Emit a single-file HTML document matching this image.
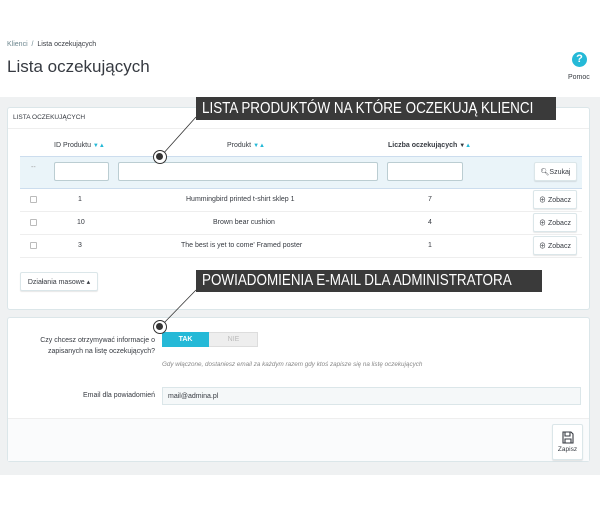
<!DOCTYPE html><html><head><meta charset="utf-8"><style>
*{box-sizing:border-box;margin:0;padding:0}
body{width:600px;height:510px;background:#fff;font-family:"Liberation Sans","Noto Sans CJK JP",sans-serif;color:#363a41;position:relative;overflow:hidden}
.a{position:absolute}
.gray{left:0;top:97px;width:600px;height:378px;background:#eff1f2}
.panel{background:#fff;border:1px solid #dbe6e9;border-radius:3px}
.t{font-size:7px;white-space:nowrap}
.inp{background:#fff;border:1px solid #bbcdd2;border-radius:2px}
.btn{background:#fff;border:1px solid #dbe6e9;border-radius:2px;font-size:7px;display:flex;align-items:center;justify-content:center;box-shadow:0 1px 1px rgba(0,0,0,.1)}
.call{background:#3a3a3a;color:#fff;font-size:16px;padding:0 6px;white-space:nowrap;overflow:hidden;line-height:23px}
.call span{display:inline-block;transform:scaleX(.84);transform-origin:0 50%}
.dot{width:14px;height:14px;border-radius:50%;border:1.5px solid #333;background:#fff}
.dot::after{content:"";position:absolute;left:2px;top:2px;width:7px;height:7px;border-radius:50%;background:#333}
.cb{width:7px;height:7px;border:1px solid #bbb;border-radius:1px}
.tri{color:#25b9d7;font-size:6px}
</style></head><body>
<div class="a t" style="left:7px;top:41px;color:#6c868e">Klienci &nbsp;/&nbsp; <span style="color:#363a41">Lista oczekujących</span></div>
<div class="a" style="left:7px;top:57px;font-size:17px">Lista oczekujących</div>
<div class="a" style="left:572px;top:52px;width:15px;height:15px;border-radius:50%;background:#25b9d7;color:#fff;font-weight:bold;font-size:11px;text-align:center;line-height:15px">?</div>
<div class="a t" style="left:568px;top:74px">Pomoc</div>
<div class="a gray"></div>
<div class="a panel" style="left:7px;top:107px;width:583px;height:203px"></div>
<div class="a t" style="left:13px;top:114px;font-size:6.5px">LISTA OCZEKUJĄCYCH</div>
<div class="a" style="left:8px;top:128px;width:581px;height:1px;background:#eee"></div>
<div class="a t" style="left:54px;top:142px">ID Produktu <span class="tri">▼▲</span></div>
<div class="a t" style="left:227px;top:142px">Produkt <span class="tri">▼▲</span></div>
<div class="a t" style="left:388px;top:142px;font-weight:bold">Liczba oczekujących <span style="font-size:6px">▼</span><span class="tri">▲</span></div>
<div class="a" style="left:20px;top:156px;width:562px;height:33px;background:#eaf4f9;border-top:1px solid #cde;border-bottom:1px solid #cde"></div>
<div class="a t" style="left:31px;top:164px;color:#999">--</div>
<div class="a inp" style="left:54px;top:162px;width:55px;height:19px"></div>
<div class="a inp" style="left:118px;top:162px;width:260px;height:19px"></div>
<div class="a inp" style="left:387px;top:162px;width:76px;height:19px"></div>
<div class="a btn" style="left:534px;top:162px;width:43px;height:19px">&#x1F50D;&#xFE0E;Szukaj</div>
<div class="a" style="left:20px;top:211px;width:562px;height:1px;background:#eee"></div>
<div class="a" style="left:20px;top:234px;width:562px;height:1px;background:#eee"></div>
<div class="a" style="left:20px;top:257px;width:562px;height:1px;background:#eee"></div>
<div class="a cb" style="left:30px;top:196px"></div><div class="a t" style="left:78px;top:196px">1</div><div class="a t" style="left:186px;top:196px">Hummingbird printed t-shirt sklep 1</div><div class="a t" style="left:428px;top:196px">7</div><div class="a btn" style="left:533px;top:190px;width:44px;height:19px">⊕ Zobacz</div>
<div class="a cb" style="left:30px;top:219px"></div><div class="a t" style="left:77px;top:219px">10</div><div class="a t" style="left:213px;top:219px">Brown bear cushion</div><div class="a t" style="left:428px;top:219px">4</div><div class="a btn" style="left:533px;top:213px;width:44px;height:19px">⊕ Zobacz</div>
<div class="a cb" style="left:30px;top:242px"></div><div class="a t" style="left:78px;top:242px">3</div><div class="a t" style="left:181px;top:242px">The best is yet to come' Framed poster</div><div class="a t" style="left:428px;top:242px">1</div><div class="a btn" style="left:533px;top:236px;width:44px;height:19px">⊕ Zobacz</div>
<div class="a btn" style="left:20px;top:272px;width:78px;height:19px">Działania masowe ▴</div>
<div class="a panel" style="left:7px;top:317px;width:583px;height:145px"></div>
<div class="a t" style="left:8px;top:335px;width:147px;text-align:right;white-space:normal;line-height:11px">Czy chcesz otrzymywać informacje o zapisanych na listę oczekujących?</div>
<div class="a" style="left:162px;top:332px;width:96px;height:15px;background:#eee;border:1px solid #ddd"></div>
<div class="a t" style="left:162px;top:332px;width:47px;height:15px;background:#25b9d7;color:#fff;text-align:center;line-height:15px;font-weight:bold">TAK</div>
<div class="a t" style="left:209px;top:332px;width:49px;height:15px;color:#bbb;text-align:center;line-height:15px">NIE</div>
<div class="a t" style="left:162px;top:361px;color:#888;font-style:italic;font-size:6.3px">Gdy włączone, dostaniesz email za każdym razem gdy ktoś zapisze się na listę oczekujących</div>
<div class="a t" style="left:40px;top:392px;width:115px;text-align:right">Email dla powiadomień</div>
<div class="a" style="left:162px;top:387px;width:419px;height:18px;background:#f5f8f9;border:1px solid #dbe6e9;font-size:7px;padding:5px 5px">mail@admina.pl</div>
<div class="a" style="left:8px;top:418px;width:581px;height:43px;background:#fafbfc;border-top:1px solid #eee"></div>
<div class="a btn" style="left:552px;top:424px;width:31px;height:36px;flex-direction:column"><svg width="12" height="13" viewBox="0 0 12 13"><path d="M1 1h8l2 2v9H1z M3 1v4h5V1 M3 12V8h6v4" fill="none" stroke="#363a41" stroke-width="1.1"/></svg><span style="font-size:6.5px;margin-top:2px">Zapisz</span></div>
<svg class="a" style="left:0;top:0" width="600" height="510"><line x1="196" y1="117" x2="162" y2="155" stroke="#333" stroke-width="0.8"/><line x1="196" y1="290" x2="162" y2="325" stroke="#333" stroke-width="0.8"/></svg>
<div class="a dot" style="left:153px;top:150px"></div>
<div class="a dot" style="left:153px;top:320px"></div>
<div class="a call" style="left:196px;top:97px;width:360px;height:23px"><span>LISTA PRODUKTÓW NA KTÓRE OCZEKUJĄ KLIENCI</span></div>
<div class="a call" style="left:196px;top:270px;width:346px;height:22px;line-height:22px"><span>POWIADOMIENIA E-MAIL DLA ADMINISTRATORA</span></div>
</body></html>
